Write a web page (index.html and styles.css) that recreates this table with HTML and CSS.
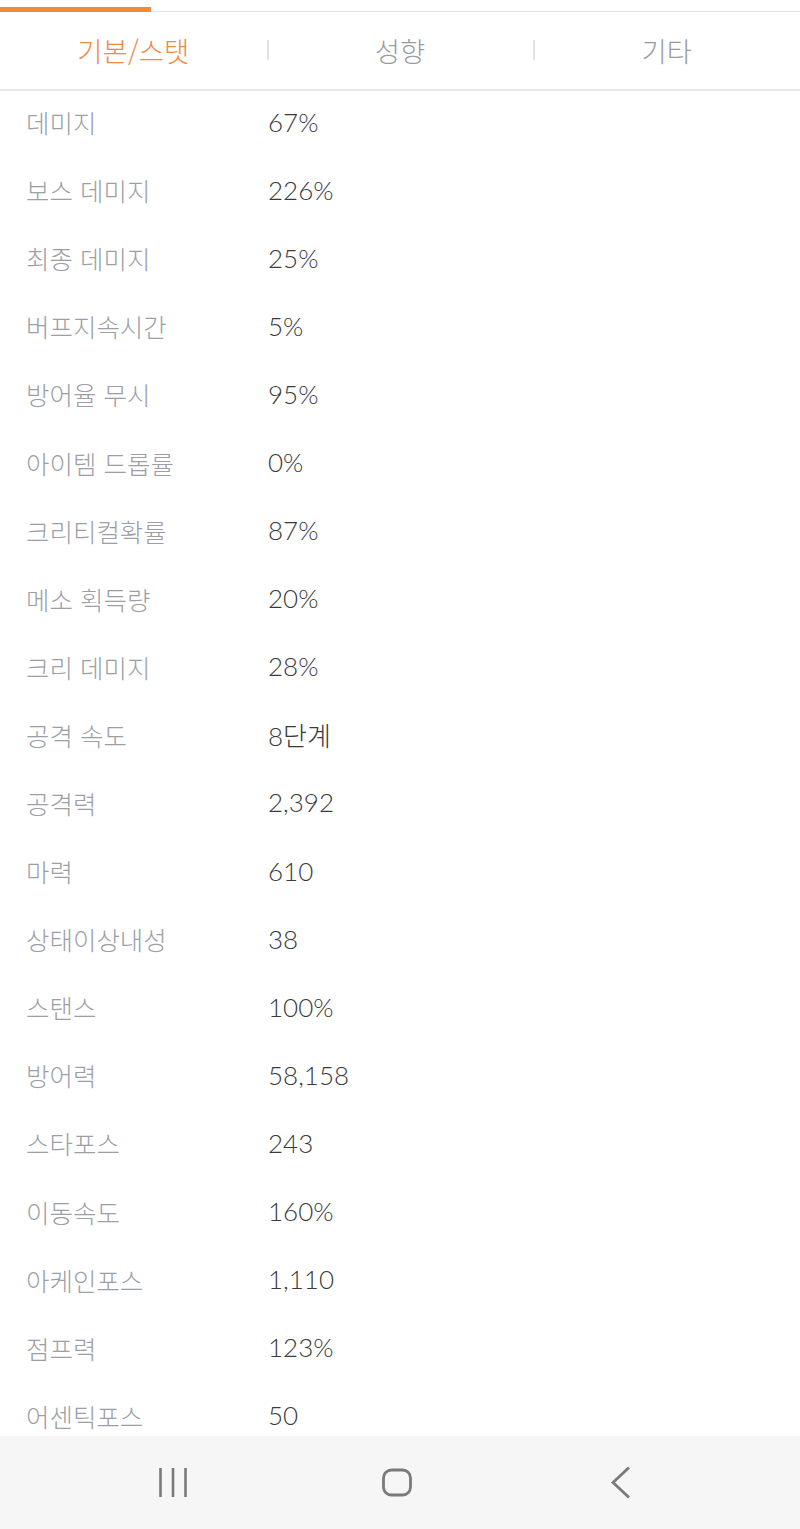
FILE: index.html
```html
<!DOCTYPE html>
<html lang="ko">
<head>
    <meta charset="UTF-8">
    <meta name="viewport" content="width=device-width, initial-scale=1.0">
    <title>캐릭터 정보</title>
    <link rel="stylesheet" href="styles.css">
</head>
<body>
    <div class="tab-track">
        <div class="tab-indicator"></div>
    </div>
    <div class="tabs">
        <div class="tab active">기본/스탯</div>
        <div class="tab">성향</div>
        <div class="tab">기타</div>
    </div>

    <div class="stats">
        <div class="row"><span class="label">데미지</span><span class="value">67%</span></div>
        <div class="row"><span class="label">보스 데미지</span><span class="value">226%</span></div>
        <div class="row"><span class="label">최종 데미지</span><span class="value">25%</span></div>
        <div class="row"><span class="label">버프지속시간</span><span class="value">5%</span></div>
        <div class="row"><span class="label">방어율 무시</span><span class="value">95%</span></div>
        <div class="row"><span class="label">아이템 드롭률</span><span class="value">0%</span></div>
        <div class="row"><span class="label">크리티컬확률</span><span class="value">87%</span></div>
        <div class="row"><span class="label">메소 획득량</span><span class="value">20%</span></div>
        <div class="row"><span class="label">크리 데미지</span><span class="value">28%</span></div>
        <div class="row"><span class="label">공격 속도</span><span class="value">8단계</span></div>
        <div class="row"><span class="label">공격력</span><span class="value">2,392</span></div>
        <div class="row"><span class="label">마력</span><span class="value">610</span></div>
        <div class="row"><span class="label">상태이상내성</span><span class="value">38</span></div>
        <div class="row"><span class="label">스탠스</span><span class="value">100%</span></div>
        <div class="row"><span class="label">방어력</span><span class="value">58,158</span></div>
        <div class="row"><span class="label">스타포스</span><span class="value">243</span></div>
        <div class="row"><span class="label">이동속도</span><span class="value">160%</span></div>
        <div class="row"><span class="label">아케인포스</span><span class="value">1,110</span></div>
        <div class="row"><span class="label">점프력</span><span class="value">123%</span></div>
        <div class="row"><span class="label">어센틱포스</span><span class="value">50</span></div>
    </div>

    <div class="navbar">
        <svg class="nav-icon" width="40" height="40" viewBox="0 0 40 40">
            <path d="M7.5 5 V34 M20 5 V34 M32.5 5 V34" stroke="#7a7a7a" stroke-width="2.6" fill="none"/>
        </svg>
        <svg class="nav-icon" width="40" height="40" viewBox="0 0 40 40">
            <rect x="6.5" y="7" width="27" height="25" rx="8" stroke="#7a7a7a" stroke-width="2.8" fill="none"/>
        </svg>
        <svg class="nav-icon" width="40" height="40" viewBox="0 0 40 40">
            <path d="M28 4.5 L12 19.5 L28 34.5" stroke="#7a7a7a" stroke-width="2.8" fill="none"/>
        </svg>
    </div>
</body>
</html>
```

FILE: styles.css
```css
body {
    margin: 0;
    background-color: #fff;
    font-family: "Noto Sans CJK KR", "Noto Sans", sans-serif;
}

.tab-track {
    height: 12px;
    border-bottom: 1px solid #e3e3e3;
    box-sizing: border-box;
    position: relative;
}

.tab-indicator {
    position: absolute;
    left: 0;
    bottom: -1px;
    width: 151px;
    height: 5px;
    background-color: #f08a3c;
}

.tabs {
    display: flex;
    height: 77px;
    border-bottom: 2px solid #e8e8e8;
}

.tab {
    flex: 1;
    display: flex;
    align-items: center;
    justify-content: center;
    font-size: 27.5px;
    font-weight: 300;
    color: #9a9ca2;
    position: relative;
    padding-bottom: 2px;
}

.tab + .tab::before {
    content: "";
    position: absolute;
    left: 0;
    top: 28px;
    width: 2px;
    height: 20px;
    background-color: #e2e2e2;
}

.tab.active {
    color: #ed8a44;
}

.stats {
    padding-bottom: 100px;
}

.row {
    display: flex;
    align-items: center;
    height: 68.1px;
    padding-left: 26px;
    padding-bottom: 7px;
    box-sizing: border-box;
}

.label {
    width: 242px;
    font-size: 25.5px;
    font-weight: 300;
    color: #9c9fa6;
}

.value {
    font-family: "Lato", "Noto Sans CJK KR", sans-serif;
    font-size: 26px;
    font-weight: 300;
    color: #3a3a3a;
}

.navbar {
    position: fixed;
    left: 0;
    right: 0;
    bottom: 0;
    height: 93px;
    background-color: #f6f6f6;
    display: flex;
    align-items: center;
    justify-content: space-between;
    padding: 0 159px 0 153px;
}
```
